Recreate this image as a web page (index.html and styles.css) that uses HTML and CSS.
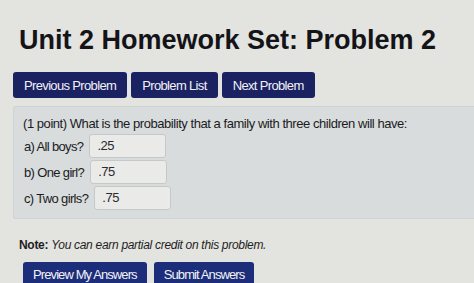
FILE: index.html
```html
<!DOCTYPE html>
<html>
<head>
<meta charset="utf-8">
<link rel="stylesheet" href="styles.css">
</head>
<body>
<div class="page">
  <h1 class="title">Unit 2 Homework Set: Problem 2</h1>
  <div class="nav">
    <button class="btn nav-btn">Previous Problem</button>
    <button class="btn nav-btn">Problem List</button>
    <button class="btn nav-btn">Next Problem</button>
  </div>
  <div class="problem">
    <p class="question">(1 point) What is the probability that a family with three children will have:</p>
    <div class="row"><span class="label">a) All boys?</span><span class="answer">.25</span></div>
    <div class="row"><span class="label">b) One girl?</span><span class="answer">.75</span></div>
    <div class="row"><span class="label">c) Two girls?</span><span class="answer">.75</span></div>
  </div>
  <p class="note"><b>Note:</b> <i>You can earn partial credit on this problem.</i></p>
  <div class="submit">
    <button class="btn sub-btn">Preview My Answers</button>
    <button class="btn sub-btn">Submit Answers</button>
  </div>
</div>
</body>
</html>
```
FILE: styles.css
```css
html, body {
  margin: 0;
  padding: 0;
  background: #e3e3df;
  font-family: "Liberation Sans", Arial, sans-serif;
  color: #1b1b1e;
  overflow: hidden;
}
.page {
  padding: 0 0 0 13px;
  display: flex;
  flex-direction: column;
}
.title {
  margin: 24px 0 0 6px;
  font-size: 27px;
  font-weight: bold;
  line-height: 32px;
  color: #141418;
}
.nav {
  display: flex;
  gap: 4px;
  margin-top: 16px;
}
.btn {
  font-family: "Liberation Sans", Arial, sans-serif;
  font-size: 13px;
  letter-spacing: -0.65px;
  color: #f2f2f6;
  border: none;
  border-radius: 3px;
  padding: 0;
  height: 26px;
}
.nav-btn {
  background: #1b2262;
  padding: 0 11px;
}
.problem {
  margin-top: 8px;
  background: #d8dcdc;
  border: 1px solid #cfd3d3;
  border-right: none;
  border-radius: 3px 0 0 3px;
  padding: 8px 0 8px 9px;
  display: flex;
  flex-direction: column;
  gap: 2px;
  font-size: 13px;
  letter-spacing: -0.45px;
}
.question {
  margin: 0;
  line-height: 17px;
}
.row {
  display: flex;
  align-items: center;
  gap: 6px;
}
.label {
  padding-left: 1px;
  letter-spacing: -0.65px;
}
.answer {
  width: 68px;
  height: 22px;
  line-height: 22px;
  padding-left: 7px;
  background: #eaeae8;
  border: 1px solid #c6c8c8;
  border-radius: 3px;
  color: #2a2a2e;
}
.note {
  margin: 18px 0 0 6px;
  font-size: 12px;
  letter-spacing: -0.3px;
  line-height: 16px;
  color: #1e1e22;
}
.submit {
  display: flex;
  gap: 7px;
  margin: 9px 0 0 10px;
}
.sub-btn {
  background: #1c2d7a;
  padding: 0 10px;
  height: 24px;
  letter-spacing: -0.9px;
}
```
